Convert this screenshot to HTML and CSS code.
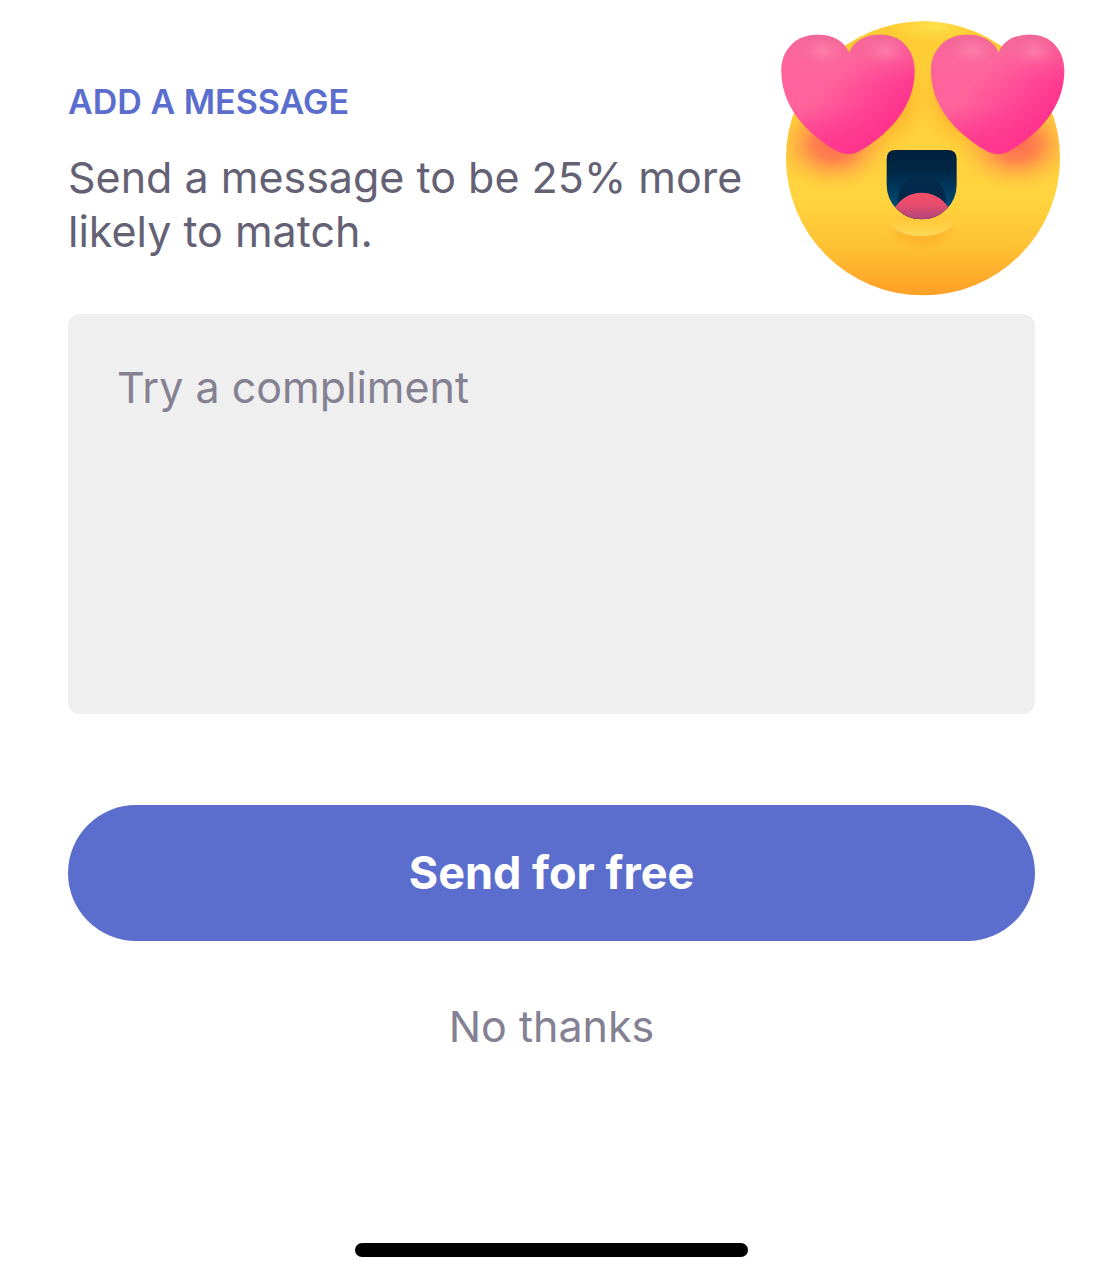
FILE: index.html
```html
<!DOCTYPE html>
<html lang="en">
<head>
<meta charset="utf-8">
<meta name="viewport" content="width=device-width, initial-scale=1">
<title>Add a message</title>
<link rel="stylesheet" href="styles.css">
</head>
<body>
<main class="sheet">
  <header class="intro">
    <div class="intro-text">
      <h1 class="title"><label for="message">ADD A MESSAGE</label></h1>
      <p class="lead">Send a message to be 25% more likely to match.</p>
    </div>
    <svg class="emoji" viewBox="30 30 858 828" aria-hidden="true">
      <defs>
        <linearGradient id="face" x1="0" y1="0" x2="0" y2="1">
          <stop offset="0" stop-color="#fdcb33"/>
          <stop offset=".3" stop-color="#ffd03a"/>
          <stop offset=".65" stop-color="#ffd43e"/>
          <stop offset=".82" stop-color="#ffc234"/>
          <stop offset="1" stop-color="#ff9f26"/>
        </linearGradient>
        <linearGradient id="heart" x1=".08" y1=".2" x2=".8" y2=".75">
          <stop offset="0" stop-color="#ff629a"/>
          <stop offset=".35" stop-color="#ff649b"/>
          <stop offset=".7" stop-color="#ff4896"/>
          <stop offset="1" stop-color="#ff348e"/>
        </linearGradient>
        <linearGradient id="heartTop" x1="0" y1="0" x2="0" y2="1">
          <stop offset="0" stop-color="#ee6a98" stop-opacity=".85"/>
          <stop offset=".4" stop-color="#ff6a9b" stop-opacity="0"/>
          <stop offset=".6" stop-color="#ff348e" stop-opacity="0"/>
          <stop offset="1" stop-color="#ff348e" stop-opacity=".9"/>
        </linearGradient>
        <radialGradient id="shine">
          <stop offset="0" stop-color="#ff8fb2" stop-opacity=".6"/>
          <stop offset="1" stop-color="#ff7fae" stop-opacity="0"/>
        </radialGradient>
        <radialGradient id="blush">
          <stop offset="0" stop-color="#ff6a52"/>
          <stop offset=".35" stop-color="#ff7650" stop-opacity=".85"/>
          <stop offset=".7" stop-color="#ff9448" stop-opacity=".35"/>
          <stop offset="1" stop-color="#ffb040" stop-opacity="0"/>
        </radialGradient>
        <radialGradient id="shade">
          <stop offset="0" stop-color="#f99a20"/>
          <stop offset=".6" stop-color="#fba528" stop-opacity=".6"/>
          <stop offset="1" stop-color="#ffc030" stop-opacity="0"/>
        </radialGradient>
        <radialGradient id="glow">
          <stop offset="0" stop-color="#ffe24c"/>
          <stop offset="1" stop-color="#ffdc40" stop-opacity="0"/>
        </radialGradient>
        <linearGradient id="mouth" x1="0" y1="0" x2="0" y2="1">
          <stop offset="0" stop-color="#001f3c"/>
          <stop offset=".3" stop-color="#002746"/>
          <stop offset=".8" stop-color="#004a75"/>
        </linearGradient>
        <linearGradient id="throat" x1="0" y1="0" x2="0" y2="1">
          <stop offset="0" stop-color="#062b4d"/>
          <stop offset=".5" stop-color="#00284a"/>
        </linearGradient>
        <linearGradient id="tongue" x1="0" y1="0" x2="0" y2="1">
          <stop offset="0" stop-color="#f54e6a"/>
          <stop offset=".2" stop-color="#e64d6c"/>
          <stop offset=".5" stop-color="#a23f82"/>
        </linearGradient>
        <linearGradient id="lip" x1="0" y1="0" x2="0" y2="1">
          <stop offset="0" stop-color="#ffc83a" stop-opacity="0"/>
          <stop offset=".5" stop-color="#ffce40"/>
          <stop offset="1" stop-color="#ffd85a"/>
        </linearGradient>
        <clipPath id="faceClip"><circle cx="459" cy="445" r="411"/></clipPath>
        <clipPath id="mouthClip"><path id="mouthShape" d="M376 420H534Q560 420 560 447V525A105 103 0 0 1 350 525V447Q350 420 376 420Z"/></clipPath>
        <path id="heartShape" d="M237 128C222 91 187 74 142 74C78 74 34 119 34 182C34 282 98 362 198 421C225 436 246 436 272 421C370 363 434 282 434 182C434 119 393 74 332 74C285 74 252 91 237 128Z"/>
      </defs>
      <circle cx="459" cy="445" r="411" fill="url(#face)"/>
      <g clip-path="url(#faceClip)">
        <ellipse cx="490" cy="48" rx="135" ry="50" fill="url(#glow)"/>
        <ellipse cx="290" cy="260" rx="195" ry="185" fill="url(#shade)"/>
        <ellipse cx="635" cy="260" rx="195" ry="185" fill="url(#shade)"/>
        <ellipse cx="190" cy="402" rx="180" ry="140" fill="url(#blush)"/>
        <ellipse cx="740" cy="402" rx="180" ry="140" fill="url(#blush)"/>
        <ellipse cx="455" cy="660" rx="120" ry="72" fill="url(#shade)" opacity=".6"/>
        <path d="M345 630Q370 628 390 600H520Q540 628 565 630Q525 679 455 679T345 630Z" fill="url(#lip)"/>
      </g>
      <use href="#mouthShape" fill="url(#mouth)"/>
      <g clip-path="url(#mouthClip)">
        <circle cx="455" cy="568" r="72" fill="url(#throat)"/>
        <ellipse cx="455" cy="640" rx="94" ry="92" fill="url(#tongue)"/>
      </g>
      <g id="eye">
        <use href="#heartShape" fill="url(#heart)"/>
        <use href="#heartShape" fill="url(#heartTop)"/>
        <ellipse cx="158" cy="122" rx="66" ry="42" fill="url(#shine)"/>
        <ellipse cx="345" cy="124" rx="66" ry="44" fill="url(#shine)"/>
      </g>
      <use href="#eye" x="449"/>
    </svg>
  </header>
  <form class="form">
    <textarea class="message" id="message" placeholder="Try a compliment"></textarea>
    <button class="send" type="submit">Send for free</button>
    <button class="skip" type="button">No thanks</button>
  </form>
  <div class="home-bar"></div>
</main>
</body>
</html>
```
FILE: styles.css
```css
* {
  box-sizing: border-box;
}

body {
  margin: 0;
  background: #fff;
  font-family: Inter, "Liberation Sans", sans-serif;
  font-size: 43px;
  line-height: 54px;
}

.sheet {
  display: flex;
  flex-direction: column;
  min-height: 100vh;
  padding-bottom: 23px;
}

.intro {
  display: flex;
  align-items: flex-start;
  justify-content: space-between;
  padding: 20px 37px 0 68px;
}

.intro-text {
  flex: 1;
  min-width: 0;
  padding-top: 62px;
}

.title {
  margin: 0 0 28px;
  color: #5b6ecd;
  font-size: 34px;
  font-weight: 600;
  line-height: 40px;
}

.lead {
  margin: 0;
  color: #656175;
}

.emoji {
  flex: none;
  width: 286px;
  height: 276px;
}

.form {
  display: flex;
  flex-direction: column;
  padding: 18px 68px 0;
}

.message {
  height: 400px;
  padding: 46px 49px;
  border: 0;
  border-radius: 12px;
  background: #efefef;
  color: #656175;
  font: inherit;
  resize: none;
}

.message::placeholder {
  color: #848192;
  opacity: 1;
}

.send,
.skip {
  border: 0;
  font: inherit;
  cursor: pointer;
}

.send {
  margin-top: 91px;
  padding: 41px;
  border-radius: 68px;
  background: #5b6ecd;
  color: #fff;
  font-size: 45px;
  font-weight: 700;
}

.skip {
  align-self: center;
  margin-top: 58px;
  padding: 0;
  background: none;
  color: #848192;
}

.home-bar {
  align-self: center;
  width: 393px;
  height: 14px;
  margin-top: auto;
  border-radius: 7px;
  background: #000;
}
```
